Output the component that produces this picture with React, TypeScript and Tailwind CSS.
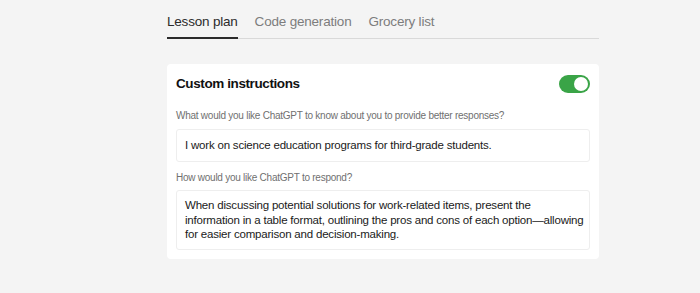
import { useState } from "react";

const tabs = ["Lesson plan", "Code generation", "Grocery list"];

export default function App() {
  const [active, setActive] = useState(0);
  const [on, setOn] = useState(true);

  return (
    <div
      className="w-[700px] h-[293px] bg-[#f4f4f4] pl-[167px]"
      style={{ fontFamily: "'Liberation Sans', Arial, sans-serif" }}
    >
      <div className="w-[432px] pt-[13px]">
        <div className="flex gap-[17px] border-b border-[#d9d9d9]">
          {tabs.map((t, i) => (
            <button
              key={t}
              onClick={() => setActive(i)}
              className={
                "pb-[6px] text-[13.5px] leading-[18px] tracking-[-0.2px] -mb-px border-b-2 " +
                (i === active
                  ? "text-[#2b2b2b] border-[#2b2b2b]"
                  : "text-[#7d7d7d] border-transparent")
              }
            >
              {t}
            </button>
          ))}
        </div>

        <div className="mt-[25px] bg-white rounded-[4px] px-[9px] pt-[10px] pb-[9px]">
          <div className="flex items-center justify-between h-[20px]">
            <h2 className="text-[13.5px] font-bold tracking-[-0.4px] text-[#111]">Custom instructions</h2>
            <button
              onClick={() => setOn(!on)}
              className={
                "w-[31px] h-[18px] rounded-full p-[2px] flex " +
                (on ? "bg-[#3aa447] justify-end" : "bg-[#ccc] justify-start")
              }
            >
              <span className="w-[14px] h-[14px] rounded-full bg-white" />
            </button>
          </div>

          <p className="mt-[15px] text-[10px] leading-[14px] tracking-[-0.25px] text-[#707070]">
            What would you like ChatGPT to know about you to provide better responses?
          </p>
          <div className="mt-[6px] border border-[#eeeeee] rounded-[3px] px-[8px] py-[8px] text-[11.5px] leading-[15px] tracking-[-0.2px] text-[#1a1a1a]">
            I work on science education programs for third-grade students.
          </div>

          <p className="mt-[9px] text-[10px] leading-[14px] tracking-[-0.25px] text-[#707070]">
            How would you like ChatGPT to respond?
          </p>
          <div className="mt-[5px] border border-[#eeeeee] rounded-[3px] px-[8px] pt-[7px] pb-[7px] text-[11.5px] leading-[14.5px] tracking-[-0.2px] text-[#1a1a1a] whitespace-nowrap">
            When discussing potential solutions for work-related items, present the
            <br />
            information in a table format, outlining the pros and cons of each option—allowing
            <br />
            for easier comparison and decision-making.
          </div>
        </div>
      </div>
    </div>
  );
}
